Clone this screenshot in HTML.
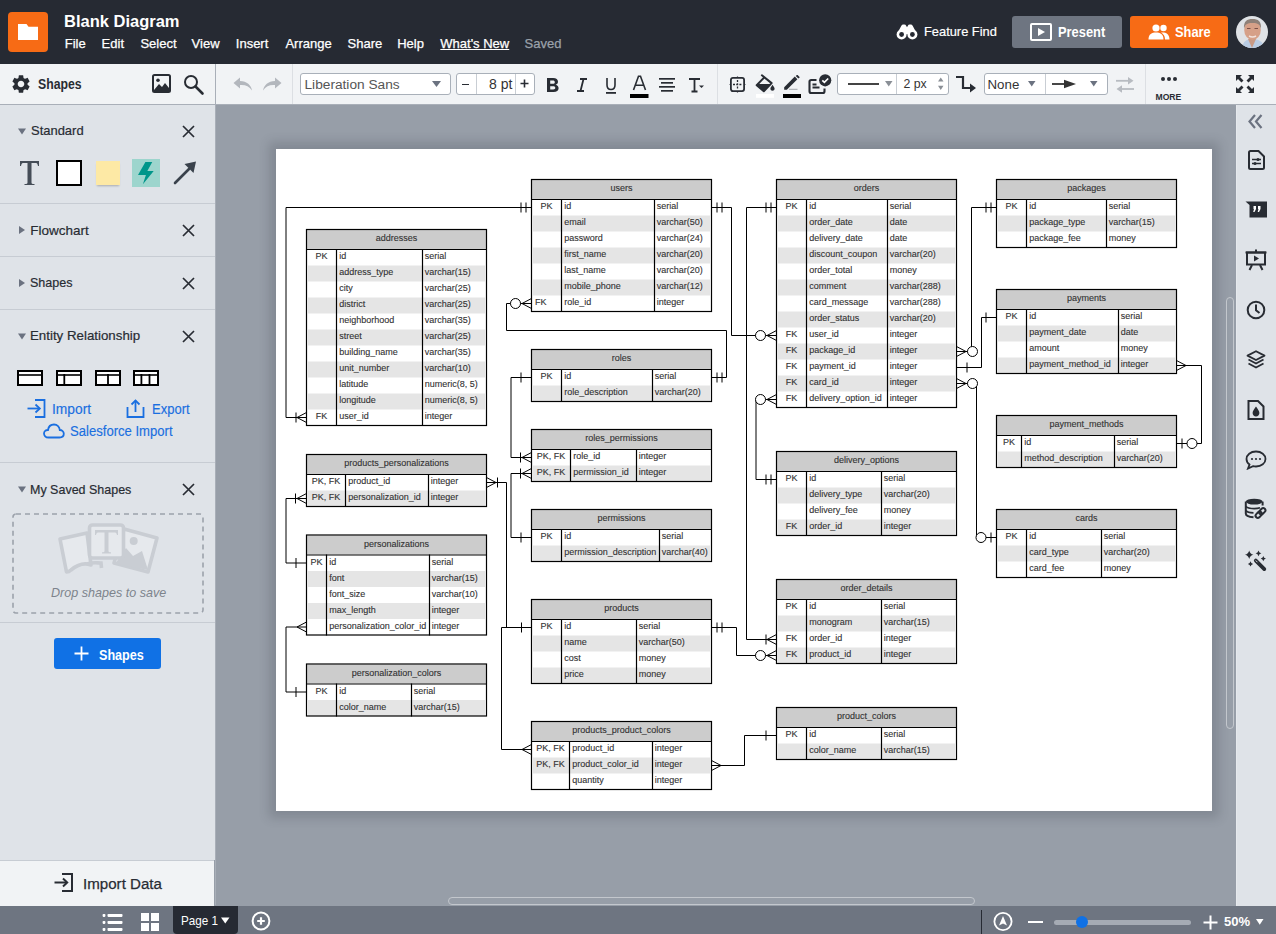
<!DOCTYPE html>
<html><head><meta charset="utf-8"><style>
*{margin:0;padding:0;box-sizing:border-box}
html,body{width:1276px;height:934px;overflow:hidden;background:#979ea8;font-family:"Liberation Sans",sans-serif}
.abs{position:absolute}
#hdr{position:absolute;left:0;top:0;width:1276px;height:64px;background:#262a33}
#tb{position:absolute;left:0;top:64px;width:1276px;height:41px;background:#f1f3f5;border-bottom:1px solid #a9afb8}
#side{position:absolute;left:0;top:105px;width:215px;height:800px;background:#dfe3e8}
#sideedge{position:absolute;left:215px;top:64px;width:1px;height:841px;background:#a9afb8}
#rpanel{position:absolute;left:1236px;top:105px;width:40px;height:800px;background:#dfe3e8;border-left:1px solid #c4c9cf}
#canvas{position:absolute;left:216px;top:105px;width:1020px;height:800px;background:#979ea8;overflow:hidden}
#page{position:absolute;left:276px;top:149px;width:936px;height:662px;background:#fff;box-shadow:0 0 10px 7px rgba(40,46,56,0.19)}
#bbar{position:absolute;left:0;top:905px;width:1276px;height:29px;background:#6e7581}
.t{position:absolute;white-space:nowrap;line-height:1}
.menu{color:#fff;font-size:13px;top:37.3px;-webkit-text-stroke-width:0.25px}
.sec{font-size:13.5px;color:#282c33}
.x{position:absolute;width:14px;height:14px}
svg text{stroke:#333;stroke-width:0.12px}
</style></head><body>
<div id="canvas"></div>
<div id="page"></div>
<div id="hdr">
<div class="abs" style="left:8px;top:12px;width:40px;height:40px;background:#f76b15;border-radius:4px"></div>
<svg class="abs" style="left:18px;top:23px" width="21" height="18" viewBox="0 0 21 18"><path d="M0,1 H8.5 L10.5,3.8 H20 V17 H0 Z" fill="#fff"/></svg>
<div class="t" style="left:64px;top:13px;font-size:16.5px;font-weight:bold;color:#fff">Blank Diagram</div>
<div class="t menu" style="left:64.7px">File</div>
<div class="t menu" style="left:101.6px">Edit</div>
<div class="t menu" style="left:140.4px">Select</div>
<div class="t menu" style="left:191.6px">View</div>
<div class="t menu" style="left:235.8px">Insert</div>
<div class="t menu" style="left:285.4px">Arrange</div>
<div class="t menu" style="left:347.5px">Share</div>
<div class="t menu" style="left:397.2px">Help</div>
<div class="t menu" style="left:440.3px;text-decoration:underline">What's New</div>
<div class="t menu" style="left:524.6px;color:#9ba1aa">Saved</div>
<svg class="abs" style="left:896px;top:24px" width="22" height="16" viewBox="0 0 22 16"><path d="M1,10 L5.2,2 Q6,0.6 7.3,0.6 H8.3 Q9.6,0.6 10.3,2 L11,3.2 L11.7,2 Q12.4,0.6 13.7,0.6 H14.7 Q16,0.6 16.8,2 L21,10 Z" fill="#fff"/><circle cx="5.6" cy="10.5" r="5" fill="#fff"/><circle cx="16.4" cy="10.5" r="5" fill="#fff"/><rect x="8" y="6" width="6" height="3.5" fill="#fff"/><circle cx="5.6" cy="10.5" r="2.4" fill="#262a33"/><circle cx="16.4" cy="10.5" r="2.4" fill="#262a33"/></svg>
<div class="t" style="left:923.5px;top:25.3px;font-size:13.4px;color:#fff;-webkit-text-stroke-width:0.2px;transform:scaleX(0.96);transform-origin:0 0">Feature Find</div>
<div class="abs" style="left:1012px;top:16px;width:110px;height:32px;background:#6e7581;border-radius:3px"></div>
<svg class="abs" style="left:1030px;top:23px" width="22" height="18" viewBox="0 0 22 18"><rect x="1" y="1" width="20" height="16" rx="1" fill="none" stroke="#fff" stroke-width="2"/><path d="M8,5 L15,9 L8,13 Z" fill="#fff"/></svg>
<div class="t" style="left:1057.8px;top:25px;font-size:14px;font-weight:bold;color:#fff;transform:scaleX(0.92);transform-origin:0 0">Present</div>
<div class="abs" style="left:1130px;top:16px;width:98px;height:32px;background:#f76b15;border-radius:3px"></div>
<svg class="abs" style="left:1148px;top:24px" width="22" height="16" viewBox="0 0 22 16"><circle cx="8" cy="4" r="3.6" fill="#fff"/><path d="M0.5,15.5 C0.5,10 4,8.5 8,8.5 C12,8.5 15.5,10 15.5,15.5 Z" fill="#fff"/><circle cx="15.5" cy="4" r="3.2" fill="#fff"/><path d="M13,8.6 C17,8 21.5,9.5 21.5,15.5 H17 C17,12 15.5,10 13,8.6 Z" fill="#fff"/></svg>
<div class="t" style="left:1174.8px;top:25px;font-size:14px;font-weight:bold;color:#fff;transform:scaleX(0.918);transform-origin:0 0">Share</div>
<svg class="abs" style="left:1236px;top:16px" width="32" height="32" viewBox="0 0 32 32"><defs><clipPath id="av"><circle cx="16" cy="16" r="16"/></clipPath></defs><g clip-path="url(#av)"><rect width="32" height="32" fill="#dfe2e6"/><path d="M6,32 C7,25 11,23 16,23 C22,23 27,25 29,32 Z" fill="#b9cce4"/><path d="M12,23 L16,32 L20,23 Z" fill="#c99a86"/><ellipse cx="16.5" cy="14" rx="8.3" ry="10" fill="#d6a088"/><path d="M8,13 C7.5,5 11,3 16.5,3 C22,3 25.5,5 25,13 C24,8.5 22,7 16.5,7 C11,7 9,8.5 8,13 Z" fill="#8e8078"/><path d="M11,12.5 H14.5 M18.5,12.5 H22" stroke="#7a5048" stroke-width="1.2"/><path d="M13,20 Q16.5,22 20,20" stroke="#f2e2dc" stroke-width="1.5" fill="none"/></g></svg>
</div>
<div id="tb">
<svg class="abs" style="left:10px;top:9px" width="22" height="22" viewBox="0 0 24 24"><path fill="#282c33" d="M19.14,12.94c0.04-0.3,0.06-0.61,0.06-0.94c0-0.32-0.02-0.64-0.07-0.94l2.03-1.58c0.18-0.14,0.23-0.41,0.12-0.61 l-1.92-3.32c-0.12-0.22-0.37-0.29-0.59-0.22l-2.39,0.96c-0.5-0.38-1.03-0.7-1.62-0.94L14.4,2.81c-0.04-0.24-0.24-0.41-0.48-0.41 h-3.84c-0.24,0-0.43,0.17-0.47,0.41L9.25,5.35C8.66,5.59,8.12,5.92,7.63,6.29L5.24,5.33c-0.22-0.08-0.47,0-0.59,0.22L2.74,8.87 C2.62,9.08,2.66,9.34,2.86,9.48l2.03,1.58C4.84,11.36,4.8,11.69,4.8,12s0.02,0.64,0.07,0.94l-2.03,1.58 c-0.18,0.14-0.23,0.41-0.12,0.61l1.92,3.32c0.12,0.22,0.37,0.29,0.59,0.22l2.39-0.96c0.5,0.38,1.03,0.7,1.62,0.94l0.36,2.54 c0.05,0.24,0.24,0.41,0.48,0.41h3.84c0.24,0,0.44-0.17,0.47-0.41l0.36-2.54c0.59-0.24,1.13-0.56,1.62-0.94l2.39,0.96 c0.22,0.08,0.47,0,0.59-0.22l1.92-3.32c0.12-0.22,0.07-0.47-0.12-0.61L19.14,12.94z M12,15.6c-1.98,0-3.6-1.62-3.6-3.6 s1.62-3.6,3.6-3.6s3.6,1.62,3.6,3.6S13.98,15.6,12,15.6z"/></svg>
<div class="t" style="left:37.5px;top:12.9px;font-size:14px;font-weight:bold;color:#282c33;transform:scaleX(0.875);transform-origin:0 0">Shapes</div>
</div>
<svg class="abs" style="left:233px;top:77px" width="20" height="14" viewBox="0 0 20 14"><path d="M7,0.5 L0.5,6 L7,11.5 V8 C12,7.5 16,9 19,13.5 C18,8 14,4.3 7,4 Z" fill="#b3b7bd"/></svg>
<svg class="abs" style="left:262px;top:77px" width="20" height="14" viewBox="0 0 20 14"><path d="M13,0.5 L19.5,6 L13,11.5 V8 C8,7.5 4,9 1,13.5 C2,8 6,4.3 13,4 Z" fill="#b3b7bd"/></svg>
<div class="abs" style="left:292px;top:64px;width:1px;height:40px;background:#dcdfe3"></div>
<div class="abs" style="left:300px;top:73px;width:151px;height:22px;background:#fff;border:1px solid #a9b0b9;border-radius:3px"></div>
<div class="t" style="left:304.5px;top:77.5px;font-size:13.7px;color:#555">Liberation Sans</div>
<svg class="abs" style="left:432px;top:81px" width="9" height="6" viewBox="0 0 9 6"><path d="M0,0 H9 L4.5,6 Z" fill="#6b7280"/></svg>
<div class="abs" style="left:456px;top:73px;width:79px;height:22px;background:#fff;border:1px solid #a9b0b9;border-radius:3px"></div>
<div class="abs" style="left:476px;top:74px;width:1px;height:20px;background:#c9ced4"></div>
<div class="abs" style="left:515px;top:74px;width:1px;height:20px;background:#c9ced4"></div>
<div class="abs" style="left:462px;top:83.5px;width:7px;height:1.5px;background:#282c33"></div>
<div class="t" style="left:489px;top:76.8px;font-size:14px;color:#333">8 pt</div>
<svg class="abs" style="left:520px;top:79px" width="9" height="9" viewBox="0 0 9 9"><path d="M4.5,0.5 V8.5 M0.5,4.5 H8.5" stroke="#282c33" stroke-width="1.6"/></svg>
<svg class="abs" style="left:546px;top:78px" width="13" height="14" viewBox="0 0 13 14"><path d="M1,0 H7.2 C10.3,0 12,1.6 12,3.8 C12,5.4 11,6.4 9.7,6.8 C11.4,7.2 12.6,8.4 12.6,10.2 C12.6,12.6 10.8,14 7.6,14 H1 Z M4.2,2.6 V5.8 H6.8 C8.1,5.8 8.8,5.2 8.8,4.2 C8.8,3.2 8.1,2.6 6.8,2.6 Z M4.2,8.2 V11.4 H7.2 C8.6,11.4 9.3,10.8 9.3,9.8 C9.3,8.8 8.6,8.2 7.2,8.2 Z" fill="#282c33"/></svg>
<svg class="abs" style="left:576px;top:78px" width="12" height="14" viewBox="0 0 12 14"><path d="M4,1 H11 M1,13 H8 M7.5,1 L4.5,13" stroke="#282c33" stroke-width="1.8" fill="none"/></svg>
<svg class="abs" style="left:605px;top:77px" width="12" height="17" viewBox="0 0 12 17"><path d="M2,1 V8 C2,11 3.5,12.5 6,12.5 C8.5,12.5 10,11 10,8 V1" stroke="#282c33" stroke-width="1.6" fill="none"/><rect x="1" y="15" width="10" height="1.8" fill="#282c33"/></svg>
<svg class="abs" style="left:630px;top:75px" width="19" height="24" viewBox="0 0 19 24"><path d="M3.5,15 L8.5,1.2 H10.5 L15.5,15 M5.3,10.2 H13.7" stroke="#282c33" stroke-width="1.6" fill="none"/><rect x="0" y="19" width="18.5" height="4" fill="#000"/></svg>
<svg class="abs" style="left:659px;top:78px" width="17" height="15" viewBox="0 0 17 15"><rect x="0" y="0" width="16" height="1.7" fill="#282c33"/><rect x="2" y="4" width="12" height="1.7" fill="#282c33"/><rect x="0" y="8" width="16" height="1.7" fill="#282c33"/><rect x="2" y="12" width="12" height="1.7" fill="#282c33"/></svg>
<svg class="abs" style="left:688px;top:78px" width="17" height="15" viewBox="0 0 17 15"><path d="M1,1 H12 M6.5,1 V13.5 M3.5,13.5 H9.5" stroke="#282c33" stroke-width="1.8" fill="none"/><path d="M11,7.5 H16 L13.5,10 Z" fill="#282c33"/></svg>
<div class="abs" style="left:717px;top:64px;width:1px;height:40px;background:#dcdfe3"></div>
<svg class="abs" style="left:728px;top:75px" width="19" height="19" viewBox="0 0 19 19"><rect x="2.9" y="2.9" width="13.2" height="13.2" rx="2" fill="none" stroke="#282c33" stroke-width="1.8"/><path d="M9.5,1.6 V3 M9.5,16 V17.4 M1.6,9.5 H3 M16,9.5 H17.4" stroke="#282c33" stroke-width="1.2"/><path d="M9.5,5 V14 M5,9.5 H14" stroke="#282c33" stroke-width="1.3" stroke-dasharray="2,1.2"/></svg>
<svg class="abs" style="left:755px;top:74px" width="21" height="25" viewBox="0 0 21 25"><path d="M6.9,1.3 L16.6,9.1 L8.8,17.3 L1.7,11.2 L9,3.6" fill="none" stroke="#282c33" stroke-width="2" stroke-linejoin="round" stroke-linecap="round"/><path d="M2.7,10 H15.9 L8.8,17.5 L1.5,11.2 Z" fill="#282c33"/><path d="M17.5,10.8 C16.4,12.6 15.4,13.6 15.4,14.7 C15.4,15.9 16.3,16.7 17.5,16.7 C18.7,16.7 19.6,15.9 19.6,14.7 C19.6,13.6 18.6,12.6 17.5,10.8 Z" fill="#282c33"/><rect x="1" y="20" width="18" height="3.8" fill="#fff"/></svg>
<svg class="abs" style="left:783px;top:75px" width="19" height="24" viewBox="0 0 19 24"><path d="M1.2,14.8 V12.2 L11.8,1.6 L14.4,4.2 L3.8,14.8 Z" fill="#282c33"/><path d="M13,0.4 L14.4,-1 L17,1.6 L15.6,3 Z" fill="#282c33" transform="translate(-0.2,0.6)"/><path d="M6,14.3 H14.5" stroke="#9a9ea4" stroke-width="0.9"/><rect x="0" y="19" width="18" height="4" fill="#000"/></svg>
<svg class="abs" style="left:808px;top:74px" width="24" height="21" viewBox="0 0 24 21"><path d="M8.5,6 H3.3 C2.2,6 1.5,6.7 1.5,7.8 V17.2 C1.5,18.3 2.2,19 3.3,19 H14.7 C15.8,19 16.5,18.3 16.5,17.2 V14.5" fill="none" stroke="#282c33" stroke-width="2.1"/><path d="M4.5,10.5 H8.5 M4.5,13.5 H11.5" stroke="#282c33" stroke-width="1.8"/><circle cx="17.2" cy="6.3" r="6.1" fill="#282c33"/><path d="M14.3,6.3 L16.4,8.4 L20.2,4.5" fill="none" stroke="#fff" stroke-width="1.7"/></svg>
<div class="abs" style="left:837px;top:73px;width:112px;height:22px;background:#fff;border:1px solid #a9b0b9;border-radius:3px"></div>
<div class="abs" style="left:896px;top:74px;width:1px;height:20px;background:#c9ced4"></div>
<div class="abs" style="left:848px;top:82.8px;width:30.5px;height:1.8px;background:#444"></div>
<svg class="abs" style="left:885px;top:81px" width="8" height="6" viewBox="0 0 8 6"><path d="M0,0 H7.5 L3.75,5.5 Z" fill="#8a8f96"/></svg>
<div class="t" style="left:903.5px;top:78px;font-size:12.3px;color:#333">2 px</div>
<svg class="abs" style="left:938px;top:77px" width="6" height="14" viewBox="0 0 6 14"><path d="M0,4.5 L2.75,0.5 L5.5,4.5 Z M0,8.8 L5.5,8.8 L2.75,13 Z" fill="#8a8f96"/></svg>
<svg class="abs" style="left:955px;top:75px" width="22" height="18" viewBox="0 0 22 18"><path d="M1,2 H8 V13 H15" fill="none" stroke="#282c33" stroke-width="2.2"/><path d="M15,8.5 L21,13 L15,17.5 Z" fill="#282c33"/></svg>
<div class="abs" style="left:984px;top:73px;width:124px;height:22px;background:#fff;border:1px solid #a9b0b9;border-radius:3px"></div>
<div class="abs" style="left:1045px;top:74px;width:1px;height:20px;background:#c9ced4"></div>
<div class="t" style="left:987.5px;top:77.5px;font-size:13.3px;color:#333">None</div>
<svg class="abs" style="left:1028px;top:81px" width="8" height="6" viewBox="0 0 8 6"><path d="M0,0 H7.5 L3.75,5.5 Z" fill="#6b7280"/></svg>
<svg class="abs" style="left:1052px;top:79px" width="25" height="10" viewBox="0 0 25 10"><path d="M0,5 H14" stroke="#333" stroke-width="1.8"/><path d="M12,0.8 L24,5 L12,9.2 Z" fill="#333"/></svg>
<svg class="abs" style="left:1090px;top:81px" width="8" height="6" viewBox="0 0 8 6"><path d="M0,0 H7.5 L3.75,5.5 Z" fill="#6b7280"/></svg>
<svg class="abs" style="left:1116px;top:77px" width="18" height="16" viewBox="0 0 18 16"><path d="M0,3.8 H14" stroke="#b7bbc1" stroke-width="1.8"/><path d="M12,0 L17.5,3.8 L12,7.6 Z" fill="#b7bbc1"/><path d="M4,12 H18" stroke="#b7bbc1" stroke-width="1.8"/><path d="M6,8.2 L0.5,12 L6,15.8 Z" fill="#b7bbc1"/></svg>
<div class="abs" style="left:1145px;top:64px;width:1px;height:40px;background:#dcdfe3"></div>
<svg class="abs" style="left:1160px;top:76px" width="18" height="6" viewBox="0 0 18 6"><circle cx="3" cy="3" r="2" fill="#282c33"/><circle cx="9" cy="3" r="2" fill="#282c33"/><circle cx="15" cy="3" r="2" fill="#282c33"/></svg>
<div class="t" style="left:1155.5px;top:92.5px;font-size:8.6px;font-weight:bold;color:#282c33">MORE</div>
<svg class="abs" style="left:1235px;top:74px" width="20" height="20" viewBox="0 0 20 20"><g fill="#282c33"><path d="M1,1 H7 L5,3 L8.5,6.5 L6.5,8.5 L3,5 L1,7 Z"/><path d="M19,1 H13 L15,3 L11.5,6.5 L13.5,8.5 L17,5 L19,7 Z"/><path d="M1,19 H7 L5,17 L8.5,13.5 L6.5,11.5 L3,15 L1,13 Z"/><path d="M19,19 H13 L15,17 L11.5,13.5 L13.5,11.5 L17,15 L19,13 Z"/></g></svg>
<svg class="abs" style="left:152px;top:74px" width="19" height="19" viewBox="0 0 19 19"><rect x="1" y="1" width="17" height="17" rx="1.5" fill="none" stroke="#282c33" stroke-width="2"/><circle cx="6" cy="6.2" r="1.8" fill="#282c33"/><path d="M2,16 L7,10 L10,13 L13,9 L17,14 V17 H2 Z" fill="#282c33"/></svg>
<svg class="abs" style="left:183px;top:74px" width="22" height="22" viewBox="0 0 22 22"><circle cx="8" cy="8" r="6" fill="none" stroke="#282c33" stroke-width="2"/><path d="M12.5,12.5 L19.5,19.5" stroke="#282c33" stroke-width="2.6" stroke-linecap="round"/></svg>
<div class="abs" style="left:0;top:105px;width:215px;height:755px;background:#dfe3e8"></div>
<div class="abs" style="left:215px;top:64px;width:1px;height:841px;background:#a9afb8"></div>
<svg class="abs" style="left:18px;top:127.5px;" width="9" height="7" viewBox="0 0 9 7"><path d="M0,0.5 H8 L4,6.5 Z" fill="#6b7280"/></svg>
<div class="t" style="left:30.7px;top:124.27px;font-size:13.5px;transform:scaleX(0.96);transform-origin:0 0;color:#282c33;-webkit-text-stroke-width:0.2px">Standard</div>
<svg class="abs" style="left:181.5px;top:124.5px;" width="13" height="13" viewBox="0 0 13 13"><path d="M1,1 L12,12 M12,1 L1,12" stroke="#282c33" stroke-width="1.7"/></svg>
<svg class="abs" style="left:19px;top:160px;" width="22" height="26" viewBox="0 0 22 26"><path d="M1,1 H20 V6 H19 C18.5,3.5 18,3 16,3 H12.5 V22.5 C12.5,23.8 13,24 15.5,24 V25 H5.5 V24 C8,24 8.5,23.8 8.5,22.5 V3 H5 C3,3 2.5,3.5 2,6 H1 Z" fill="#454d57"/></svg>
<div class="abs" style="left:56px;top:160px;width:26px;height:26px;background:#fff;border:2px solid #000"></div>
<div class="abs" style="left:96px;top:161px;width:24px;height:24px;background:#fde9a5;box-shadow:0 2px 2px -1px rgba(0,0,0,0.25)"></div>
<div class="abs" style="left:132px;top:159px;width:28px;height:28px;background:#9dd5cd"></div>
<svg class="abs" style="left:138px;top:162px;" width="17" height="23" viewBox="0 0 17 23"><path d="M7.4,0 L14.25,0 L9.35,9.1 L15.7,9.1 L4.9,22.3 L7.9,13 L0,13 Z" fill="#00968a"/></svg>
<svg class="abs" style="left:173px;top:160px;" width="24" height="25" viewBox="0 0 24 25"><path d="M2,23 L16,9" stroke="#3a424c" stroke-width="2.6" stroke-linecap="round"/><path d="M11.5,4 L23,1.5 L20.5,13 Z" fill="#3a424c"/></svg>
<div class="abs" style="left:0;top:203px;width:215px;height:1px;background:#c7ccd3"></div>
<svg class="abs" style="left:19px;top:226px;" width="7" height="9" viewBox="0 0 7 9"><path d="M0,0 L6,4 L0,8 Z" fill="#6b7280"/></svg>
<div class="t" style="left:30.3px;top:223.87px;font-size:13.5px;color:#282c33;-webkit-text-stroke-width:0.2px">Flowchart</div>
<svg class="abs" style="left:181.5px;top:224px;" width="13" height="13" viewBox="0 0 13 13"><path d="M1,1 L12,12 M12,1 L1,12" stroke="#282c33" stroke-width="1.7"/></svg>
<div class="abs" style="left:0;top:256px;width:215px;height:1px;background:#c7ccd3"></div>
<svg class="abs" style="left:19px;top:279px;" width="7" height="9" viewBox="0 0 7 9"><path d="M0,0 L6,4 L0,8 Z" fill="#6b7280"/></svg>
<div class="t" style="left:30.3px;top:276.37px;font-size:13.5px;transform:scaleX(0.93);transform-origin:0 0;color:#282c33;-webkit-text-stroke-width:0.2px">Shapes</div>
<svg class="abs" style="left:181.5px;top:277px;" width="13" height="13" viewBox="0 0 13 13"><path d="M1,1 L12,12 M12,1 L1,12" stroke="#282c33" stroke-width="1.7"/></svg>
<div class="abs" style="left:0;top:309px;width:215px;height:1px;background:#c7ccd3"></div>
<svg class="abs" style="left:18px;top:333px;" width="9" height="7" viewBox="0 0 9 7"><path d="M0,0.5 H8 L4,6.5 Z" fill="#6b7280"/></svg>
<div class="t" style="left:30.3px;top:329.17px;font-size:13.5px;transform:scaleX(0.985);transform-origin:0 0;color:#282c33;-webkit-text-stroke-width:0.2px">Entity Relationship</div>
<svg class="abs" style="left:181.5px;top:330px;" width="13" height="13" viewBox="0 0 13 13"><path d="M1,1 L12,12 M12,1 L1,12" stroke="#282c33" stroke-width="1.7"/></svg>
<svg class="abs" style="left:17px;top:370px;" width="26" height="16" viewBox="0 0 26 16"><rect x="1" y="1" width="24" height="14" fill="#fff" stroke="#000" stroke-width="2"/><path d="M1,5 H25" stroke="#000" stroke-width="1.6"/></svg>
<svg class="abs" style="left:56px;top:370px;" width="26" height="16" viewBox="0 0 26 16"><rect x="1" y="1" width="24" height="14" fill="#fff" stroke="#000" stroke-width="2"/><path d="M1,5 H25" stroke="#000" stroke-width="1.6"/><path d="M8.3,4 V15" stroke="#000" stroke-width="1.8"/></svg>
<svg class="abs" style="left:95px;top:370px;" width="26" height="16" viewBox="0 0 26 16"><rect x="1" y="1" width="24" height="14" fill="#fff" stroke="#000" stroke-width="2"/><path d="M1,5 H25" stroke="#000" stroke-width="1.6"/><path d="M13,4 V15" stroke="#000" stroke-width="1.8"/></svg>
<svg class="abs" style="left:133px;top:370px;" width="26" height="16" viewBox="0 0 26 16"><rect x="1" y="1" width="24" height="14" fill="#fff" stroke="#000" stroke-width="2"/><path d="M1,5 H25" stroke="#000" stroke-width="1.6"/><path d="M8.4,4 V15" stroke="#000" stroke-width="1.8"/><path d="M16.5,4 V15" stroke="#000" stroke-width="1.8"/></svg>
<svg class="abs" style="left:27px;top:399px;" width="20" height="19" viewBox="0 0 20 19"><path d="M8,1 H17.5 V18 H8" fill="none" stroke="#1a6fe0" stroke-width="1.8"/><path d="M0.5,9.5 H12" stroke="#1a6fe0" stroke-width="1.8"/><path d="M8.5,5.5 L12.8,9.5 L8.5,13.5" fill="none" stroke="#1a6fe0" stroke-width="1.8"/></svg>
<div class="t" style="left:52.2px;top:402.15px;font-size:14px;transform:scaleX(0.985);transform-origin:0 0;color:#1a6fe0;-webkit-text-stroke-width:0.15px">Import</div>
<svg class="abs" style="left:126px;top:399px;" width="20" height="20" viewBox="0 0 20 20"><path d="M1.5,8 V18 H17.5 V8" fill="none" stroke="#1a6fe0" stroke-width="1.8"/><path d="M9.5,1.5 V13" stroke="#1a6fe0" stroke-width="1.8"/><path d="M5.5,5.5 L9.5,1.5 L13.5,5.5" fill="none" stroke="#1a6fe0" stroke-width="1.8"/></svg>
<div class="t" style="left:152.1px;top:402.15px;font-size:14px;transform:scaleX(0.93);transform-origin:0 0;color:#1a6fe0;-webkit-text-stroke-width:0.15px">Export</div>
<svg class="abs" style="left:43px;top:423px;" width="22" height="16" viewBox="0 0 22 16"><path d="M5.5,14.5 C2.5,14.5 1,12.5 1,10.5 C1,8.3 2.8,6.8 5,7 C5.5,3.5 8,1.5 11,1.5 C14.3,1.5 16.5,4 16.8,7 C19,7 20.8,8.6 20.8,10.8 C20.8,13 19,14.5 16.5,14.5 Z" fill="none" stroke="#1a6fe0" stroke-width="1.8"/></svg>
<div class="t" style="left:69.6px;top:423.65px;font-size:14px;transform:scaleX(0.935);transform-origin:0 0;color:#1a6fe0;-webkit-text-stroke-width:0.15px">Salesforce Import</div>
<div class="abs" style="left:0;top:462px;width:215px;height:1px;background:#c7ccd3"></div>
<svg class="abs" style="left:18px;top:486px;" width="9" height="7" viewBox="0 0 9 7"><path d="M0,0.5 H8 L4,6.5 Z" fill="#6b7280"/></svg>
<div class="t" style="left:30.3px;top:482.57px;font-size:13.5px;transform:scaleX(0.925);transform-origin:0 0;color:#282c33;-webkit-text-stroke-width:0.2px">My Saved Shapes</div>
<svg class="abs" style="left:181.5px;top:483px;" width="13" height="13" viewBox="0 0 13 13"><path d="M1,1 L12,12 M12,1 L1,12" stroke="#282c33" stroke-width="1.7"/></svg>
<svg class="abs" style="left:12px;top:513px;" width="192" height="101" viewBox="0 0 192 101"><rect x="1" y="1" width="190" height="99" rx="3" fill="none" stroke="#9ca2ab" stroke-width="1.6" stroke-dasharray="5,4"/></svg>
<svg class="abs" style="left:55px;top:520px;" width="106" height="56" viewBox="0 0 106 56"><path d="M5,19 L32,13 L36,45 C28,42 22,45 16,50 C14,52 12,52 11.5,52 Z" fill="#e6e9ed" stroke="#c9cdd3" stroke-width="3.6" stroke-linejoin="round"/><path d="M32,44 C38,42 42,43 46,43 L46.5,48" fill="none" stroke="#c9cdd3" stroke-width="3.6"/><path d="M69,9 L102,18 L93,52 L59,43 Z" fill="#e6e9ed" stroke="#c9cdd3" stroke-width="3.6" stroke-linejoin="round"/><circle cx="78.7" cy="21" r="4" fill="#c9cdd3"/><path d="M60,44 L71,28 L78,36 L87,31 L93,50 Z" fill="#c9cdd3"/><rect x="34.5" y="5" width="34" height="33" rx="3" fill="#e6e9ed" stroke="#c9cdd3" stroke-width="3.6"/><path d="M40,10 H63 V15 H62 C61.5,13 61,12.5 59,12.5 H53.5 V31 C53.5,32 54,32.3 56,32.3 V33.5 H47 V32.3 C49,32.3 49.5,32 49.5,31 V12.5 H44 C42,12.5 41.5,13 41,15 H40 Z" fill="#c9cdd3"/></svg>
<div class="t" style="left:51px;top:585.77px;font-size:13.5px;transform:scaleX(0.93);transform-origin:0 0;color:#7d838c;font-style:italic">Drop shapes to save</div>
<div class="abs" style="left:0;top:622px;width:215px;height:1px;background:#c7ccd3"></div>
<div class="abs" style="left:54px;top:638px;width:107px;height:31px;background:#1071e5;border-radius:3px"></div>
<svg class="abs" style="left:74px;top:646px;" width="15" height="15" viewBox="0 0 15 15"><path d="M7.5,0.5 V14.5 M0.5,7.5 H14.5" stroke="#fff" stroke-width="1.8"/></svg>
<div class="t" style="left:98.5px;top:647.65px;font-size:14px;transform:scaleX(0.9);transform-origin:0 0;color:#fff;font-weight:bold">Shapes</div>
<div class="abs" style="left:0;top:860px;width:214px;height:46px;background:#f1f3f5;border-top:1px solid #c7ccd3"></div>
<svg class="abs" style="left:54px;top:873px;" width="20" height="19" viewBox="0 0 20 19"><path d="M8,1 H18 V18 H8" fill="none" stroke="#282c33" stroke-width="2"/><path d="M0.5,9.5 H13" stroke="#282c33" stroke-width="2"/><path d="M9,5.5 L13.2,9.5 L9,13.5" fill="none" stroke="#282c33" stroke-width="2"/></svg>
<div class="t" style="left:82.8px;top:875.88px;font-size:15.5px;transform:scaleX(0.975);transform-origin:0 0;color:#282c33;-webkit-text-stroke-width:0.25px">Import Data</div>
<div class="abs" style="left:1236px;top:105px;width:40px;height:801px;background:#dfe3e8;border-left:1px solid #e6e9ed"></div>
<svg class="abs" style="left:1248px;top:114px;" width="15" height="15" viewBox="0 0 15 15"><path d="M7,1 L1.5,7.5 L7,14 M13.5,1 L8,7.5 L13.5,14" fill="none" stroke="#6b7280" stroke-width="2.2"/></svg>
<svg class="abs" style="left:1248px;top:150px;" width="17" height="20" viewBox="0 0 17 20"><path d="M2,1 H10.5 L16,6.5 V17.5 C16,18.3 15.5,19 14.5,19 H2.5 C1.5,19 1,18.3 1,17.5 V2.5 C1,1.5 1.5,1 2.5,1 Z" fill="none" stroke="#282c33" stroke-width="2"/><path d="M4,9.5 H13 M4,13.5 H13" stroke="#282c33" stroke-width="1.4"/><circle cx="10" cy="9.5" r="1.5" fill="#282c33"/><circle cx="7" cy="13.5" r="1.5" fill="#282c33"/></svg>
<svg class="abs" style="left:1245px;top:201px;" width="23" height="17" viewBox="0 0 23 17"><path d="M0.5,0.5 H22 V16.5 H4.5 V4 Z" fill="#282c33"/><path d="M8.5,5 H11 V8 L9.5,11 H8.2 L9,8 H8.5 Z M13,5 H15.5 V8 L14,11 H12.7 L13.5,8 H13 Z" fill="#fff"/></svg>
<svg class="abs" style="left:1245px;top:249px;" width="22" height="22" viewBox="0 0 22 22"><path d="M11,0.5 V3" stroke="#282c33" stroke-width="2"/><rect x="2" y="3.5" width="18" height="12" fill="none" stroke="#282c33" stroke-width="2"/><path d="M0.5,3.5 H21.5" stroke="#282c33" stroke-width="2"/><path d="M9,6.5 L14,9.5 L9,12.5 Z" fill="#282c33"/><path d="M7,16 L4.5,21 M15,16 L17.5,21" stroke="#282c33" stroke-width="2"/></svg>
<svg class="abs" style="left:1246px;top:300px;" width="20" height="20" viewBox="0 0 20 20"><circle cx="10" cy="10" r="8.3" fill="none" stroke="#282c33" stroke-width="2"/><path d="M10,4.5 V10.3 L13.5,13" fill="none" stroke="#282c33" stroke-width="2"/></svg>
<svg class="abs" style="left:1246px;top:350px;" width="20" height="20" viewBox="0 0 20 20"><path d="M10,1.2 L18.5,5.6 L10,10 L1.5,5.6 Z" fill="none" stroke="#282c33" stroke-width="1.8" stroke-linejoin="round"/><path d="M2.5,9.5 L10,13.5 L17.5,9.5 M2.5,13.5 L10,17.5 L17.5,13.5" fill="none" stroke="#282c33" stroke-width="1.8" stroke-linejoin="round"/></svg>
<svg class="abs" style="left:1246px;top:400px;" width="20" height="20" viewBox="0 0 20 20"><path d="M2.5,1 H12 L17.5,6.5 V19 H2.5 Z" fill="none" stroke="#282c33" stroke-width="2"/><path d="M10,6.5 C8.3,9.2 6.6,10.8 6.6,13 C6.6,15 8.1,16.4 10,16.4 C11.9,16.4 13.4,15 13.4,13 C13.4,10.8 11.7,9.2 10,6.5 Z" fill="#282c33"/></svg>
<svg class="abs" style="left:1245px;top:450px;" width="22" height="20" viewBox="0 0 22 20"><path d="M11,1.5 C16.5,1.5 20.5,4.8 20.5,9 C20.5,13.2 16.5,16.5 11,16.5 C10,16.5 9,16.4 8,16.1 L3,18.5 L4.5,14.5 C2.5,13 1.5,11.2 1.5,9 C1.5,4.8 5.5,1.5 11,1.5 Z" fill="none" stroke="#282c33" stroke-width="1.8"/><circle cx="7" cy="9" r="1.1" fill="#282c33"/><circle cx="11" cy="9" r="1.1" fill="#282c33"/><circle cx="15" cy="9" r="1.1" fill="#282c33"/></svg>
<svg class="abs" style="left:1244px;top:498px;" width="25" height="25" viewBox="0 0 25 25"><ellipse cx="10.2" cy="3.6" rx="8.4" ry="2.9" fill="#282c33"/><path d="M1.8,3.6 V15.5 C1.8,17.5 5,19 9.5,19.3" fill="none" stroke="#282c33" stroke-width="2"/><path d="M18.6,3.6 V7.5" stroke="#282c33" stroke-width="2"/><path d="M1.8,8.2 C3,9.8 6.5,10.6 10.2,10.6 C12.5,10.6 14.5,10.3 16,9.8 M1.8,12.4 C3,14 6,14.7 9.5,14.8" fill="none" stroke="#282c33" stroke-width="1.7"/><g transform="rotate(-45 16.5 15)"><rect x="10.5" y="12.8" width="7" height="4.4" rx="2.2" fill="none" stroke="#282c33" stroke-width="2"/><rect x="15.5" y="12.8" width="7" height="4.4" rx="2.2" fill="none" stroke="#282c33" stroke-width="2"/></g></svg>
<svg class="abs" style="left:1244px;top:549px;" width="24" height="23" viewBox="0 0 24 23"><path d="M5.2,1.5 Q5.956,4.944 9.4,5.7 Q5.956,6.456 5.2,9.9 Q4.444,6.456 1.0,5.7 Q4.444,4.944 5.2,1.5 Z M14.5,1.4 Q15.022,3.7779999999999996 17.4,4.3 Q15.022,4.822 14.5,7.199999999999999 Q13.978,4.822 11.6,4.3 Q13.978,3.7779999999999996 14.5,1.4 Z M19.3,7.0 Q19.768,9.132 21.900000000000002,9.6 Q19.768,10.068 19.3,12.2 Q18.832,10.068 16.7,9.6 Q18.832,9.132 19.3,7.0 Z M6.5,12.3 Q6.968,14.432 9.1,14.9 Q6.968,15.368 6.5,17.5 Q6.032,15.368 3.9,14.9 Q6.032,14.432 6.5,12.3 Z" fill="#282c33"/><path d="M11.8,11.6 L20.3,20.1" stroke="#282c33" stroke-width="3.8" stroke-linecap="round"/><path d="M12,11.8 L13.2,13" stroke="#dfe3e8" stroke-width="0.9" stroke-linecap="round"/></svg>
<div class="abs" style="left:1226px;top:297px;width:8px;height:432px;border:1px solid #c3c7cd;border-radius:4px"></div>
<div class="abs" style="left:0;top:906px;width:1276px;height:28px;background:#6e7581"></div>
<svg class="abs" style="left:102px;top:913px;" width="21" height="19" viewBox="0 0 21 19"><rect x="0.6" y="1" width="2.8" height="2.9" rx="0.8" fill="#fff"/><rect x="0.6" y="8" width="2.8" height="2.9" rx="0.8" fill="#fff"/><rect x="0.6" y="15" width="2.8" height="2.9" rx="0.8" fill="#fff"/><rect x="5.5" y="1" width="15" height="2.9" rx="0.8" fill="#fff"/><rect x="5.5" y="8" width="15" height="2.9" rx="0.8" fill="#fff"/><rect x="5.5" y="15" width="15" height="2.9" rx="0.8" fill="#fff"/></svg>
<svg class="abs" style="left:140px;top:912px;" width="20" height="19" viewBox="0 0 20 19"><rect x="1" y="1" width="8" height="8" fill="#fff"/><rect x="11" y="1" width="8" height="8" fill="#fff"/><rect x="1" y="11" width="8" height="8" fill="#fff"/><rect x="11" y="11" width="8" height="8" fill="#fff"/></svg>
<div class="abs" style="left:173px;top:906px;width:65px;height:28px;background:#262a33;border-radius:0 0 4px 4px"></div>
<div class="t" style="left:180.6px;top:913.57px;font-size:13.5px;transform:scaleX(0.865);transform-origin:0 0;color:#fff">Page 1</div>
<svg class="abs" style="left:221px;top:917px;" width="9" height="7" viewBox="0 0 9 7"><path d="M0,0.5 H8.5 L4.25,6.5 Z" fill="#fff"/></svg>
<svg class="abs" style="left:251px;top:911px;" width="20" height="20" viewBox="0 0 20 20"><circle cx="10" cy="10" r="8.4" fill="none" stroke="#fff" stroke-width="2"/><path d="M10,6.2 V13.8 M6.2,10 H13.8" stroke="#fff" stroke-width="2.2"/></svg>
<div class="abs" style="left:981px;top:910px;width:1px;height:24px;background:#262a33"></div>
<svg class="abs" style="left:993px;top:911px;" width="20" height="20" viewBox="0 0 20 20"><circle cx="10" cy="10.5" r="8.6" fill="none" stroke="#fff" stroke-width="1.8"/><path d="M10,5 L14,14.5 L10,12.5 L6,14.5 Z" fill="#fff"/></svg>
<div class="abs" style="left:1027.5px;top:921px;width:15px;height:2px;background:#fff"></div>
<div class="abs" style="left:1054px;top:920px;width:137px;height:4.5px;background:#a5abb4;border-radius:3px"></div>
<div class="abs" style="left:1076px;top:916px;width:12px;height:12px;background:#1071e5;border-radius:50%"></div>
<svg class="abs" style="left:1203px;top:915px;" width="15" height="15" viewBox="0 0 15 15"><path d="M7.5,0.5 V14.5 M0.5,7.5 H14.5" stroke="#fff" stroke-width="2"/></svg>
<div class="t" style="left:1223.8px;top:915.34px;font-size:13.3px;transform:scaleX(0.98);transform-origin:0 0;color:#fff;font-weight:bold">50%</div>
<svg class="abs" style="left:1256px;top:919px;" width="8" height="6" viewBox="0 0 8 6"><path d="M0,0 H7.5 L3.75,5.8 Z" fill="#fff"/></svg>
<div class="abs" style="left:448px;top:897px;width:527px;height:8px;border:1px solid #c3c7cd;border-radius:4px"></div>
<svg width="1276" height="934" viewBox="0 0 1276 934" style="position:absolute;left:0;top:0" font-family="Liberation Sans, sans-serif" font-size="9" fill="#333">
<path d="M531.5,207.5 L286,207.5 L286,417.5 L306.5,417.5" stroke="#000" stroke-width="1" fill="none"/>
<line x1="526.0" y1="202.5" x2="526.0" y2="212.5" stroke="#000" stroke-width="1" fill="none"/><line x1="521.0" y1="202.5" x2="521.0" y2="212.5" stroke="#000" stroke-width="1" fill="none"/>
<path d="M297.0,417.5 L306.5,412.5 M297.0,417.5 L306.5,422.5" stroke="#000" stroke-width="1" fill="none"/><line x1="296.0" y1="412.5" x2="296.0" y2="422.5" stroke="#000" stroke-width="1" fill="none"/>
<path d="M711.5,207.5 L731.5,207.5 L731.5,335.5 L776.5,335.5" stroke="#000" stroke-width="1" fill="none"/>
<line x1="717.0" y1="202.5" x2="717.0" y2="212.5" stroke="#000" stroke-width="1" fill="none"/><line x1="722.0" y1="202.5" x2="722.0" y2="212.5" stroke="#000" stroke-width="1" fill="none"/>
<path d="M767.0,335.5 L776.5,330.5 M767.0,335.5 L776.5,340.5" stroke="#000" stroke-width="1" fill="none"/><circle cx="760.5" cy="335.5" r="5" fill="#fff" stroke="#000" stroke-width="1" fill="none"/>
<path d="M531.5,303.5 L506.5,303.5 L506.5,330.5 L726.5,330.5 L726.5,377.5 L711.5,377.5" stroke="#000" stroke-width="1" fill="none"/>
<path d="M522.0,303.5 L531.5,298.5 M522.0,303.5 L531.5,308.5" stroke="#000" stroke-width="1" fill="none"/><circle cx="515.5" cy="303.5" r="5" fill="#fff" stroke="#000" stroke-width="1" fill="none"/>
<line x1="717.0" y1="372.5" x2="717.0" y2="382.5" stroke="#000" stroke-width="1" fill="none"/><line x1="722.0" y1="372.5" x2="722.0" y2="382.5" stroke="#000" stroke-width="1" fill="none"/>
<path d="M531.5,377.5 L511,377.5 L511,457.5 L531.5,457.5" stroke="#000" stroke-width="1" fill="none"/>
<line x1="521.0" y1="372.5" x2="521.0" y2="382.5" stroke="#000" stroke-width="1" fill="none"/>
<path d="M522.0,457.5 L531.5,452.5 M522.0,457.5 L531.5,462.5" stroke="#000" stroke-width="1" fill="none"/><line x1="520.5" y1="452.5" x2="520.5" y2="462.5" stroke="#000" stroke-width="1" fill="none"/>
<path d="M531.5,537.5 L511,537.5 L511,473.5 L531.5,473.5" stroke="#000" stroke-width="1" fill="none"/>
<line x1="521.0" y1="532.5" x2="521.0" y2="542.5" stroke="#000" stroke-width="1" fill="none"/>
<path d="M522.0,473.5 L531.5,468.5 M522.0,473.5 L531.5,478.5" stroke="#000" stroke-width="1" fill="none"/><line x1="520.5" y1="468.5" x2="520.5" y2="478.5" stroke="#000" stroke-width="1" fill="none"/>
<path d="M486.5,482.5 L506.5,482.5 L506.5,627.5 L531.5,627.5" stroke="#000" stroke-width="1" fill="none"/>
<path d="M496.0,482.5 L486.5,477.5 M496.0,482.5 L486.5,487.5" stroke="#000" stroke-width="1" fill="none"/><line x1="497.5" y1="477.5" x2="497.5" y2="487.5" stroke="#000" stroke-width="1" fill="none"/>
<line x1="521.5" y1="622.5" x2="521.5" y2="632.5" stroke="#000" stroke-width="1" fill="none"/>
<path d="M531.5,627.5 L501.5,627.5 L501.5,749.5 L531.5,749.5" stroke="#000" stroke-width="1" fill="none"/>
<path d="M522.0,749.5 L531.5,744.5 M522.0,749.5 L531.5,754.5" stroke="#000" stroke-width="1" fill="none"/>
<path d="M306.5,563.0 L286,563.0 L286,498.5 L306.5,498.5" stroke="#000" stroke-width="1" fill="none"/>
<line x1="296.0" y1="558.0" x2="296.0" y2="568.0" stroke="#000" stroke-width="1" fill="none"/>
<path d="M297.0,498.5 L306.5,493.5 M297.0,498.5 L306.5,503.5" stroke="#000" stroke-width="1" fill="none"/><line x1="295.5" y1="493.5" x2="295.5" y2="503.5" stroke="#000" stroke-width="1" fill="none"/>
<path d="M306.5,692.0 L286,692.0 L286,627.0 L306.5,627.0" stroke="#000" stroke-width="1" fill="none"/>
<line x1="296.0" y1="687.0" x2="296.0" y2="697.0" stroke="#000" stroke-width="1" fill="none"/>
<path d="M297.0,627.0 L306.5,622.0 M297.0,627.0 L306.5,632.0" stroke="#000" stroke-width="1" fill="none"/>
<path d="M776.5,207.5 L746.5,207.5 L746.5,639.5 L776.5,639.5" stroke="#000" stroke-width="1" fill="none"/>
<line x1="771.0" y1="202.5" x2="771.0" y2="212.5" stroke="#000" stroke-width="1" fill="none"/><line x1="766.0" y1="202.5" x2="766.0" y2="212.5" stroke="#000" stroke-width="1" fill="none"/>
<path d="M767.0,639.5 L776.5,634.5 M767.0,639.5 L776.5,644.5" stroke="#000" stroke-width="1" fill="none"/><line x1="766.0" y1="634.5" x2="766.0" y2="644.5" stroke="#000" stroke-width="1" fill="none"/>
<path d="M776.5,399.5 L756,399.5 L756,479.5 L776.5,479.5" stroke="#000" stroke-width="1" fill="none"/>
<path d="M767.0,399.5 L776.5,394.5 M767.0,399.5 L776.5,404.5" stroke="#000" stroke-width="1" fill="none"/><circle cx="760.5" cy="399.5" r="5" fill="#fff" stroke="#000" stroke-width="1" fill="none"/>
<line x1="771.0" y1="474.5" x2="771.0" y2="484.5" stroke="#000" stroke-width="1" fill="none"/><line x1="766.0" y1="474.5" x2="766.0" y2="484.5" stroke="#000" stroke-width="1" fill="none"/>
<path d="M711.5,627.5 L736.5,627.5 L736.5,655.5 L776.5,655.5" stroke="#000" stroke-width="1" fill="none"/>
<line x1="717.0" y1="622.5" x2="717.0" y2="632.5" stroke="#000" stroke-width="1" fill="none"/><line x1="722.0" y1="622.5" x2="722.0" y2="632.5" stroke="#000" stroke-width="1" fill="none"/>
<path d="M767.0,655.5 L776.5,650.5 M767.0,655.5 L776.5,660.5" stroke="#000" stroke-width="1" fill="none"/><circle cx="760.5" cy="655.5" r="5" fill="#fff" stroke="#000" stroke-width="1" fill="none"/>
<path d="M711.5,765.5 L744.5,765.5 L744.5,735.5 L776.5,735.5" stroke="#000" stroke-width="1" fill="none"/>
<path d="M721.0,765.5 L711.5,760.5 M721.0,765.5 L711.5,770.5" stroke="#000" stroke-width="1" fill="none"/>
<line x1="766.0" y1="730.5" x2="766.0" y2="740.5" stroke="#000" stroke-width="1" fill="none"/>
<path d="M996.5,207.5 L971.5,207.5 L971.5,351.5 L956.5,351.5" stroke="#000" stroke-width="1" fill="none"/>
<line x1="991.0" y1="202.5" x2="991.0" y2="212.5" stroke="#000" stroke-width="1" fill="none"/><line x1="986.0" y1="202.5" x2="986.0" y2="212.5" stroke="#000" stroke-width="1" fill="none"/>
<path d="M966.0,351.5 L956.5,346.5 M966.0,351.5 L956.5,356.5" stroke="#000" stroke-width="1" fill="none"/><circle cx="972.5" cy="351.5" r="5" fill="#fff" stroke="#000" stroke-width="1" fill="none"/>
<path d="M996.5,317.5 L981.5,317.5 L981.5,367.5 L956.5,367.5" stroke="#000" stroke-width="1" fill="none"/>
<line x1="986.0" y1="312.5" x2="986.0" y2="322.5" stroke="#000" stroke-width="1" fill="none"/>
<line x1="967.0" y1="362.5" x2="967.0" y2="372.5" stroke="#000" stroke-width="1" fill="none"/>
<path d="M956.5,383.5 L976.5,383.5 L976.5,537.5 L996.5,537.5" stroke="#000" stroke-width="1" fill="none"/>
<path d="M966.0,383.5 L956.5,378.5 M966.0,383.5 L956.5,388.5" stroke="#000" stroke-width="1" fill="none"/><circle cx="972.5" cy="383.5" r="5" fill="#fff" stroke="#000" stroke-width="1" fill="none"/>
<line x1="991.0" y1="532.5" x2="991.0" y2="542.5" stroke="#000" stroke-width="1" fill="none"/><circle cx="981.0" cy="537.5" r="5" fill="#fff" stroke="#000" stroke-width="1" fill="none"/>
<path d="M1176.5,365.5 L1201.5,365.5 L1201.5,443.5 L1176.5,443.5" stroke="#000" stroke-width="1" fill="none"/>
<path d="M1186.0,365.5 L1176.5,360.5 M1186.0,365.5 L1176.5,370.5" stroke="#000" stroke-width="1" fill="none"/>
<line x1="1182.0" y1="438.5" x2="1182.0" y2="448.5" stroke="#000" stroke-width="1" fill="none"/><circle cx="1192.0" cy="443.5" r="5" fill="#fff" stroke="#000" stroke-width="1" fill="none"/>
<rect x="532" y="180" width="179" height="19" fill="#ccc"/>
<rect x="532" y="200" width="179" height="111" fill="#fff"/>
<rect x="533" y="215.5" width="177" height="16" fill="#e5e5e5"/>
<rect x="533" y="247.5" width="177" height="16" fill="#e5e5e5"/>
<rect x="533" y="279.5" width="177" height="16" fill="#e5e5e5"/>
<rect x="531.5" y="179.5" width="180" height="132" fill="none" stroke="#000" stroke-width="1.2"/>
<line x1="531" y1="199.5" x2="712" y2="199.5" stroke="#000" stroke-width="1.2"/>
<line x1="561.5" y1="199" x2="561.5" y2="312" stroke="#000" stroke-width="1.2"/>
<line x1="654.5" y1="199" x2="654.5" y2="312" stroke="#000" stroke-width="1.2"/>
<text x="621.5" y="191" text-anchor="middle">users</text>
<text x="546.5" y="209.1" text-anchor="middle">PK</text>
<text x="564.2" y="209.1">id</text>
<text x="656.7" y="209.1">serial</text>
<text x="564.2" y="225.1">email</text>
<text x="656.7" y="225.1">varchar(50)</text>
<text x="564.2" y="241.1">password</text>
<text x="656.7" y="241.1">varchar(24)</text>
<text x="564.2" y="257.1">first_name</text>
<text x="656.7" y="257.1">varchar(20)</text>
<text x="564.2" y="273.1">last_name</text>
<text x="656.7" y="273.1">varchar(20)</text>
<text x="564.2" y="289.1">mobile_phone</text>
<text x="656.7" y="289.1">varchar(12)</text>
<text x="535" y="305.1">FK</text>
<text x="564.2" y="305.1">role_id</text>
<text x="656.7" y="305.1">integer</text>
<rect x="777" y="180" width="179" height="19" fill="#ccc"/>
<rect x="777" y="200" width="179" height="207" fill="#fff"/>
<rect x="778" y="215.5" width="177" height="16" fill="#e5e5e5"/>
<rect x="778" y="247.5" width="177" height="16" fill="#e5e5e5"/>
<rect x="778" y="279.5" width="177" height="16" fill="#e5e5e5"/>
<rect x="778" y="311.5" width="177" height="16" fill="#e5e5e5"/>
<rect x="778" y="343.5" width="177" height="16" fill="#e5e5e5"/>
<rect x="778" y="375.5" width="177" height="16" fill="#e5e5e5"/>
<rect x="776.5" y="179.5" width="180" height="228" fill="none" stroke="#000" stroke-width="1.2"/>
<line x1="776" y1="199.5" x2="957" y2="199.5" stroke="#000" stroke-width="1.2"/>
<line x1="806.5" y1="199" x2="806.5" y2="408" stroke="#000" stroke-width="1.2"/>
<line x1="887.5" y1="199" x2="887.5" y2="408" stroke="#000" stroke-width="1.2"/>
<text x="866.5" y="191" text-anchor="middle">orders</text>
<text x="791.5" y="209.1" text-anchor="middle">PK</text>
<text x="809.2" y="209.1">id</text>
<text x="889.7" y="209.1">serial</text>
<text x="809.2" y="225.1">order_date</text>
<text x="889.7" y="225.1">date</text>
<text x="809.2" y="241.1">delivery_date</text>
<text x="889.7" y="241.1">date</text>
<text x="809.2" y="257.1">discount_coupon</text>
<text x="889.7" y="257.1">varchar(20)</text>
<text x="809.2" y="273.1">order_total</text>
<text x="889.7" y="273.1">money</text>
<text x="809.2" y="289.1">comment</text>
<text x="889.7" y="289.1">varchar(288)</text>
<text x="809.2" y="305.1">card_message</text>
<text x="889.7" y="305.1">varchar(288)</text>
<text x="809.2" y="321.1">order_status</text>
<text x="889.7" y="321.1">varchar(20)</text>
<text x="791.5" y="337.1" text-anchor="middle">FK</text>
<text x="809.2" y="337.1">user_id</text>
<text x="889.7" y="337.1">integer</text>
<text x="791.5" y="353.1" text-anchor="middle">FK</text>
<text x="809.2" y="353.1">package_id</text>
<text x="889.7" y="353.1">integer</text>
<text x="791.5" y="369.1" text-anchor="middle">FK</text>
<text x="809.2" y="369.1">payment_id</text>
<text x="889.7" y="369.1">integer</text>
<text x="791.5" y="385.1" text-anchor="middle">FK</text>
<text x="809.2" y="385.1">card_id</text>
<text x="889.7" y="385.1">integer</text>
<text x="791.5" y="401.1" text-anchor="middle">FK</text>
<text x="809.2" y="401.1">delivery_option_id</text>
<text x="889.7" y="401.1">integer</text>
<rect x="997" y="180" width="179" height="19" fill="#ccc"/>
<rect x="997" y="200" width="179" height="47" fill="#fff"/>
<rect x="998" y="215.5" width="177" height="16" fill="#e5e5e5"/>
<rect x="996.5" y="179.5" width="180" height="68" fill="none" stroke="#000" stroke-width="1.2"/>
<line x1="996" y1="199.5" x2="1177" y2="199.5" stroke="#000" stroke-width="1.2"/>
<line x1="1026.5" y1="199" x2="1026.5" y2="248" stroke="#000" stroke-width="1.2"/>
<line x1="1106.5" y1="199" x2="1106.5" y2="248" stroke="#000" stroke-width="1.2"/>
<text x="1086.5" y="191" text-anchor="middle">packages</text>
<text x="1011.5" y="209.1" text-anchor="middle">PK</text>
<text x="1029.2" y="209.1">id</text>
<text x="1108.7" y="209.1">serial</text>
<text x="1029.2" y="225.1">package_type</text>
<text x="1108.7" y="225.1">varchar(15)</text>
<text x="1029.2" y="241.1">package_fee</text>
<text x="1108.7" y="241.1">money</text>
<rect x="307" y="230" width="179" height="19" fill="#ccc"/>
<rect x="307" y="250" width="179" height="175" fill="#fff"/>
<rect x="308" y="265.5" width="177" height="16" fill="#e5e5e5"/>
<rect x="308" y="297.5" width="177" height="16" fill="#e5e5e5"/>
<rect x="308" y="329.5" width="177" height="16" fill="#e5e5e5"/>
<rect x="308" y="361.5" width="177" height="16" fill="#e5e5e5"/>
<rect x="308" y="393.5" width="177" height="16" fill="#e5e5e5"/>
<rect x="306.5" y="229.5" width="180" height="196" fill="none" stroke="#000" stroke-width="1.2"/>
<line x1="306" y1="249.5" x2="487" y2="249.5" stroke="#000" stroke-width="1.2"/>
<line x1="336.5" y1="249" x2="336.5" y2="426" stroke="#000" stroke-width="1.2"/>
<line x1="422.5" y1="249" x2="422.5" y2="426" stroke="#000" stroke-width="1.2"/>
<text x="396.5" y="241" text-anchor="middle">addresses</text>
<text x="321.5" y="259.1" text-anchor="middle">PK</text>
<text x="339.2" y="259.1">id</text>
<text x="424.7" y="259.1">serial</text>
<text x="339.2" y="275.1">address_type</text>
<text x="424.7" y="275.1">varchar(15)</text>
<text x="339.2" y="291.1">city</text>
<text x="424.7" y="291.1">varchar(25)</text>
<text x="339.2" y="307.1">district</text>
<text x="424.7" y="307.1">varchar(25)</text>
<text x="339.2" y="323.1">neighborhood</text>
<text x="424.7" y="323.1">varchar(35)</text>
<text x="339.2" y="339.1">street</text>
<text x="424.7" y="339.1">varchar(25)</text>
<text x="339.2" y="355.1">building_name</text>
<text x="424.7" y="355.1">varchar(35)</text>
<text x="339.2" y="371.1">unit_number</text>
<text x="424.7" y="371.1">varchar(10)</text>
<text x="339.2" y="387.1">latitude</text>
<text x="424.7" y="387.1">numeric(8, 5)</text>
<text x="339.2" y="403.1">longitude</text>
<text x="424.7" y="403.1">numeric(8, 5)</text>
<text x="321.5" y="419.1" text-anchor="middle">FK</text>
<text x="339.2" y="419.1">user_id</text>
<text x="424.7" y="419.1">integer</text>
<rect x="532" y="350" width="179" height="19" fill="#ccc"/>
<rect x="532" y="370" width="179" height="31" fill="#fff"/>
<rect x="533" y="385.5" width="177" height="16" fill="#e5e5e5"/>
<rect x="531.5" y="349.5" width="180" height="52" fill="none" stroke="#000" stroke-width="1.2"/>
<line x1="531" y1="369.5" x2="712" y2="369.5" stroke="#000" stroke-width="1.2"/>
<line x1="561.5" y1="369" x2="561.5" y2="402" stroke="#000" stroke-width="1.2"/>
<line x1="652.5" y1="369" x2="652.5" y2="402" stroke="#000" stroke-width="1.2"/>
<text x="621.5" y="361" text-anchor="middle">roles</text>
<text x="546.5" y="379.1" text-anchor="middle">PK</text>
<text x="564.2" y="379.1">id</text>
<text x="654.7" y="379.1">serial</text>
<text x="564.2" y="395.1">role_description</text>
<text x="654.7" y="395.1">varchar(20)</text>
<rect x="997" y="290" width="179" height="19" fill="#ccc"/>
<rect x="997" y="310" width="179" height="63" fill="#fff"/>
<rect x="998" y="325.5" width="177" height="16" fill="#e5e5e5"/>
<rect x="998" y="357.5" width="177" height="16" fill="#e5e5e5"/>
<rect x="996.5" y="289.5" width="180" height="84" fill="none" stroke="#000" stroke-width="1.2"/>
<line x1="996" y1="309.5" x2="1177" y2="309.5" stroke="#000" stroke-width="1.2"/>
<line x1="1026.5" y1="309" x2="1026.5" y2="374" stroke="#000" stroke-width="1.2"/>
<line x1="1118.5" y1="309" x2="1118.5" y2="374" stroke="#000" stroke-width="1.2"/>
<text x="1086.5" y="301" text-anchor="middle">payments</text>
<text x="1011.5" y="319.1" text-anchor="middle">PK</text>
<text x="1029.2" y="319.1">id</text>
<text x="1120.7" y="319.1">serial</text>
<text x="1029.2" y="335.1">payment_date</text>
<text x="1120.7" y="335.1">date</text>
<text x="1029.2" y="351.1">amount</text>
<text x="1120.7" y="351.1">money</text>
<text x="1029.2" y="367.1">payment_method_id</text>
<text x="1120.7" y="367.1">integer</text>
<rect x="532" y="430" width="179" height="19" fill="#ccc"/>
<rect x="532" y="450" width="179" height="31" fill="#fff"/>
<rect x="533" y="465.5" width="177" height="16" fill="#e5e5e5"/>
<rect x="531.5" y="429.5" width="180" height="52" fill="none" stroke="#000" stroke-width="1.2"/>
<line x1="531" y1="449.5" x2="712" y2="449.5" stroke="#000" stroke-width="1.2"/>
<line x1="570.5" y1="449" x2="570.5" y2="482" stroke="#000" stroke-width="1.2"/>
<line x1="636.5" y1="449" x2="636.5" y2="482" stroke="#000" stroke-width="1.2"/>
<text x="621.5" y="441" text-anchor="middle">roles_permissions</text>
<text x="551.0" y="459.1" text-anchor="middle">PK, FK</text>
<text x="573.2" y="459.1">role_id</text>
<text x="638.7" y="459.1">integer</text>
<text x="551.0" y="475.1" text-anchor="middle">PK, FK</text>
<text x="573.2" y="475.1">permission_id</text>
<text x="638.7" y="475.1">integer</text>
<rect x="307" y="455" width="179" height="19" fill="#ccc"/>
<rect x="307" y="475" width="179" height="31" fill="#fff"/>
<rect x="308" y="490.5" width="177" height="16" fill="#e5e5e5"/>
<rect x="306.5" y="454.5" width="180" height="52" fill="none" stroke="#000" stroke-width="1.2"/>
<line x1="306" y1="474.5" x2="487" y2="474.5" stroke="#000" stroke-width="1.2"/>
<line x1="345.5" y1="474" x2="345.5" y2="507" stroke="#000" stroke-width="1.2"/>
<line x1="428.5" y1="474" x2="428.5" y2="507" stroke="#000" stroke-width="1.2"/>
<text x="396.5" y="466" text-anchor="middle">products_personalizations</text>
<text x="326.0" y="484.1" text-anchor="middle">PK, FK</text>
<text x="348.2" y="484.1">product_id</text>
<text x="430.7" y="484.1">integer</text>
<text x="326.0" y="500.1" text-anchor="middle">PK, FK</text>
<text x="348.2" y="500.1">personalization_id</text>
<text x="430.7" y="500.1">integer</text>
<rect x="777" y="452" width="179" height="19" fill="#ccc"/>
<rect x="777" y="472" width="179" height="63" fill="#fff"/>
<rect x="778" y="487.5" width="177" height="16" fill="#e5e5e5"/>
<rect x="778" y="519.5" width="177" height="16" fill="#e5e5e5"/>
<rect x="776.5" y="451.5" width="180" height="84" fill="none" stroke="#000" stroke-width="1.2"/>
<line x1="776" y1="471.5" x2="957" y2="471.5" stroke="#000" stroke-width="1.2"/>
<line x1="806.5" y1="471" x2="806.5" y2="536" stroke="#000" stroke-width="1.2"/>
<line x1="881.5" y1="471" x2="881.5" y2="536" stroke="#000" stroke-width="1.2"/>
<text x="866.5" y="463" text-anchor="middle">delivery_options</text>
<text x="791.5" y="481.1" text-anchor="middle">PK</text>
<text x="809.2" y="481.1">id</text>
<text x="883.7" y="481.1">serial</text>
<text x="809.2" y="497.1">delivery_type</text>
<text x="883.7" y="497.1">varchar(20)</text>
<text x="809.2" y="513.1">delivery_fee</text>
<text x="883.7" y="513.1">money</text>
<text x="791.5" y="529.1" text-anchor="middle">FK</text>
<text x="809.2" y="529.1">order_id</text>
<text x="883.7" y="529.1">integer</text>
<rect x="997" y="416" width="179" height="19" fill="#ccc"/>
<rect x="997" y="436" width="179" height="31" fill="#fff"/>
<rect x="998" y="451.5" width="177" height="16" fill="#e5e5e5"/>
<rect x="996.5" y="415.5" width="180" height="52" fill="none" stroke="#000" stroke-width="1.2"/>
<line x1="996" y1="435.5" x2="1177" y2="435.5" stroke="#000" stroke-width="1.2"/>
<line x1="1021.5" y1="435" x2="1021.5" y2="468" stroke="#000" stroke-width="1.2"/>
<line x1="1114.5" y1="435" x2="1114.5" y2="468" stroke="#000" stroke-width="1.2"/>
<text x="1086.5" y="427" text-anchor="middle">payment_methods</text>
<text x="1009.0" y="445.1" text-anchor="middle">PK</text>
<text x="1024.2" y="445.1">id</text>
<text x="1116.7" y="445.1">serial</text>
<text x="1024.2" y="461.1">method_description</text>
<text x="1116.7" y="461.1">varchar(20)</text>
<rect x="532" y="510" width="179" height="19" fill="#ccc"/>
<rect x="532" y="530" width="179" height="31" fill="#fff"/>
<rect x="533" y="545.5" width="177" height="16" fill="#e5e5e5"/>
<rect x="531.5" y="509.5" width="180" height="52" fill="none" stroke="#000" stroke-width="1.2"/>
<line x1="531" y1="529.5" x2="712" y2="529.5" stroke="#000" stroke-width="1.2"/>
<line x1="561.5" y1="529" x2="561.5" y2="562" stroke="#000" stroke-width="1.2"/>
<line x1="659.5" y1="529" x2="659.5" y2="562" stroke="#000" stroke-width="1.2"/>
<text x="621.5" y="521" text-anchor="middle">permissions</text>
<text x="546.5" y="539.1" text-anchor="middle">PK</text>
<text x="564.2" y="539.1">id</text>
<text x="661.7" y="539.1">serial</text>
<text x="564.2" y="555.1">permission_description</text>
<text x="661.7" y="555.1">varchar(40)</text>
<rect x="997" y="510" width="179" height="19" fill="#ccc"/>
<rect x="997" y="530" width="179" height="47" fill="#fff"/>
<rect x="998" y="545.5" width="177" height="16" fill="#e5e5e5"/>
<rect x="996.5" y="509.5" width="180" height="68" fill="none" stroke="#000" stroke-width="1.2"/>
<line x1="996" y1="529.5" x2="1177" y2="529.5" stroke="#000" stroke-width="1.2"/>
<line x1="1026.5" y1="529" x2="1026.5" y2="578" stroke="#000" stroke-width="1.2"/>
<line x1="1101.5" y1="529" x2="1101.5" y2="578" stroke="#000" stroke-width="1.2"/>
<text x="1086.5" y="521" text-anchor="middle">cards</text>
<text x="1011.5" y="539.1" text-anchor="middle">PK</text>
<text x="1029.2" y="539.1">id</text>
<text x="1103.7" y="539.1">serial</text>
<text x="1029.2" y="555.1">card_type</text>
<text x="1103.7" y="555.1">varchar(20)</text>
<text x="1029.2" y="571.1">card_fee</text>
<text x="1103.7" y="571.1">money</text>
<rect x="307" y="535.5" width="179" height="19.0" fill="#ccc"/>
<rect x="307" y="555.5" width="179" height="79.0" fill="#fff"/>
<rect x="308" y="571.0" width="177" height="16" fill="#e5e5e5"/>
<rect x="308" y="603.0" width="177" height="16" fill="#e5e5e5"/>
<rect x="306.5" y="535.0" width="180" height="100.0" fill="none" stroke="#000" stroke-width="1.2"/>
<line x1="306" y1="555.0" x2="487" y2="555.0" stroke="#000" stroke-width="1.2"/>
<line x1="326.5" y1="554.5" x2="326.5" y2="635.5" stroke="#000" stroke-width="1.2"/>
<line x1="429.5" y1="554.5" x2="429.5" y2="635.5" stroke="#000" stroke-width="1.2"/>
<text x="396.5" y="546.5" text-anchor="middle">personalizations</text>
<text x="316.5" y="564.6" text-anchor="middle">PK</text>
<text x="329.2" y="564.6">id</text>
<text x="431.7" y="564.6">serial</text>
<text x="329.2" y="580.6">font</text>
<text x="431.7" y="580.6">varchar(15)</text>
<text x="329.2" y="596.6">font_size</text>
<text x="431.7" y="596.6">varchar(10)</text>
<text x="329.2" y="612.6">max_length</text>
<text x="431.7" y="612.6">integer</text>
<text x="329.2" y="628.6">personalization_color_id</text>
<text x="431.7" y="628.6">integer</text>
<rect x="532" y="600" width="179" height="19" fill="#ccc"/>
<rect x="532" y="620" width="179" height="63" fill="#fff"/>
<rect x="533" y="635.5" width="177" height="16" fill="#e5e5e5"/>
<rect x="533" y="667.5" width="177" height="16" fill="#e5e5e5"/>
<rect x="531.5" y="599.5" width="180" height="84" fill="none" stroke="#000" stroke-width="1.2"/>
<line x1="531" y1="619.5" x2="712" y2="619.5" stroke="#000" stroke-width="1.2"/>
<line x1="561.5" y1="619" x2="561.5" y2="684" stroke="#000" stroke-width="1.2"/>
<line x1="636.5" y1="619" x2="636.5" y2="684" stroke="#000" stroke-width="1.2"/>
<text x="621.5" y="611" text-anchor="middle">products</text>
<text x="546.5" y="629.1" text-anchor="middle">PK</text>
<text x="564.2" y="629.1">id</text>
<text x="638.7" y="629.1">serial</text>
<text x="564.2" y="645.1">name</text>
<text x="638.7" y="645.1">varchar(50)</text>
<text x="564.2" y="661.1">cost</text>
<text x="638.7" y="661.1">money</text>
<text x="564.2" y="677.1">price</text>
<text x="638.7" y="677.1">money</text>
<rect x="777" y="580" width="179" height="19" fill="#ccc"/>
<rect x="777" y="600" width="179" height="63" fill="#fff"/>
<rect x="778" y="615.5" width="177" height="16" fill="#e5e5e5"/>
<rect x="778" y="647.5" width="177" height="16" fill="#e5e5e5"/>
<rect x="776.5" y="579.5" width="180" height="84" fill="none" stroke="#000" stroke-width="1.2"/>
<line x1="776" y1="599.5" x2="957" y2="599.5" stroke="#000" stroke-width="1.2"/>
<line x1="806.5" y1="599" x2="806.5" y2="664" stroke="#000" stroke-width="1.2"/>
<line x1="881.5" y1="599" x2="881.5" y2="664" stroke="#000" stroke-width="1.2"/>
<text x="866.5" y="591" text-anchor="middle">order_details</text>
<text x="791.5" y="609.1" text-anchor="middle">PK</text>
<text x="809.2" y="609.1">id</text>
<text x="883.7" y="609.1">serial</text>
<text x="809.2" y="625.1">monogram</text>
<text x="883.7" y="625.1">varchar(15)</text>
<text x="791.5" y="641.1" text-anchor="middle">FK</text>
<text x="809.2" y="641.1">order_id</text>
<text x="883.7" y="641.1">integer</text>
<text x="791.5" y="657.1" text-anchor="middle">FK</text>
<text x="809.2" y="657.1">product_id</text>
<text x="883.7" y="657.1">integer</text>
<rect x="307" y="664.5" width="179" height="19.0" fill="#ccc"/>
<rect x="307" y="684.5" width="179" height="31.0" fill="#fff"/>
<rect x="308" y="700.0" width="177" height="16" fill="#e5e5e5"/>
<rect x="306.5" y="664.0" width="180" height="52.0" fill="none" stroke="#000" stroke-width="1.2"/>
<line x1="306" y1="684.0" x2="487" y2="684.0" stroke="#000" stroke-width="1.2"/>
<line x1="336.5" y1="683.5" x2="336.5" y2="716.5" stroke="#000" stroke-width="1.2"/>
<line x1="411.5" y1="683.5" x2="411.5" y2="716.5" stroke="#000" stroke-width="1.2"/>
<text x="396.5" y="675.5" text-anchor="middle">personalization_colors</text>
<text x="321.5" y="693.6" text-anchor="middle">PK</text>
<text x="339.2" y="693.6">id</text>
<text x="413.7" y="693.6">serial</text>
<text x="339.2" y="709.6">color_name</text>
<text x="413.7" y="709.6">varchar(15)</text>
<rect x="532" y="722" width="179" height="19" fill="#ccc"/>
<rect x="532" y="742" width="179" height="47" fill="#fff"/>
<rect x="533" y="757.5" width="177" height="16" fill="#e5e5e5"/>
<rect x="531.5" y="721.5" width="180" height="68" fill="none" stroke="#000" stroke-width="1.2"/>
<line x1="531" y1="741.5" x2="712" y2="741.5" stroke="#000" stroke-width="1.2"/>
<line x1="569.5" y1="741" x2="569.5" y2="790" stroke="#000" stroke-width="1.2"/>
<line x1="652.5" y1="741" x2="652.5" y2="790" stroke="#000" stroke-width="1.2"/>
<text x="621.5" y="733" text-anchor="middle">products_product_colors</text>
<text x="550.5" y="751.1" text-anchor="middle">PK, FK</text>
<text x="572.2" y="751.1">product_id</text>
<text x="654.7" y="751.1">integer</text>
<text x="550.5" y="767.1" text-anchor="middle">PK, FK</text>
<text x="572.2" y="767.1">product_color_id</text>
<text x="654.7" y="767.1">integer</text>
<text x="572.2" y="783.1">quantity</text>
<text x="654.7" y="783.1">integer</text>
<rect x="777" y="708" width="179" height="19" fill="#ccc"/>
<rect x="777" y="728" width="179" height="31" fill="#fff"/>
<rect x="778" y="743.5" width="177" height="16" fill="#e5e5e5"/>
<rect x="776.5" y="707.5" width="180" height="52" fill="none" stroke="#000" stroke-width="1.2"/>
<line x1="776" y1="727.5" x2="957" y2="727.5" stroke="#000" stroke-width="1.2"/>
<line x1="806.5" y1="727" x2="806.5" y2="760" stroke="#000" stroke-width="1.2"/>
<line x1="881.5" y1="727" x2="881.5" y2="760" stroke="#000" stroke-width="1.2"/>
<text x="866.5" y="719" text-anchor="middle">product_colors</text>
<text x="791.5" y="737.1" text-anchor="middle">PK</text>
<text x="809.2" y="737.1">id</text>
<text x="883.7" y="737.1">serial</text>
<text x="809.2" y="753.1">color_name</text>
<text x="883.7" y="753.1">varchar(15)</text>
</svg>
</body></html>
